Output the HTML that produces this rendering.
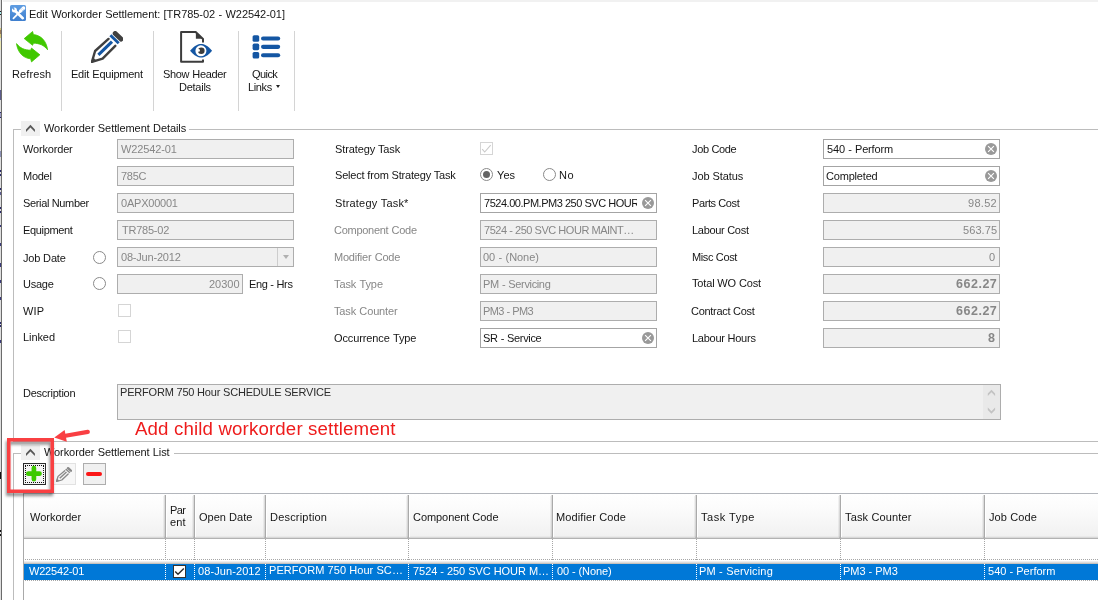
<!DOCTYPE html>
<html>
<head>
<meta charset="utf-8">
<title>Edit Workorder Settlement</title>
<style>
html,body{margin:0;padding:0;}
body{width:1098px;height:600px;overflow:hidden;background:#fff;position:relative;font-family:"Liberation Sans",sans-serif;font-size:11px;color:#161616;}
.a{position:absolute;white-space:nowrap;}
.t{position:absolute;white-space:nowrap;line-height:14px;height:14px;will-change:transform;}
.th{letter-spacing:0px;}
.g{color:#8c8c8c;}
.in{position:absolute;box-sizing:border-box;height:20px;width:177px;border:1px solid #adadad;background:#f0f0f0;color:#8c8c8c;line-height:18px;padding:0 3px;white-space:nowrap;overflow:hidden;}
.in.w{background:#fff;color:#1e1e1e;border-color:#a4a4a4;}
.in.r{text-align:right;padding-right:3px;}
.in.b{font-weight:bold;font-size:12px;}
.sep{position:absolute;top:31px;width:1px;height:80px;background:#d4d4d4;}
.hl{position:absolute;height:1px;background:#bcbcbc;}
.vl{position:absolute;width:1px;background:#bcbcbc;}
.radio{position:absolute;box-sizing:border-box;width:13px;height:13px;border:1px solid #8a8a8a;border-radius:50%;background:#fff;}
.cb{position:absolute;box-sizing:border-box;width:13px;height:13px;border:1px solid #d5d5d5;background:#fff;}
.clr{position:absolute;width:12px;height:12px;}
.colb{position:absolute;background:#f0f0f0;}
.hs{position:absolute;top:495px;width:1px;height:43px;background:#aaaaaa;}
.hs0{position:absolute;top:496px;width:1px;height:41px;background:rgba(0,0,0,0.05);}
.hs1{position:absolute;top:495px;width:1px;height:43px;background:rgba(0,0,0,0.13);}
.hs2{position:absolute;top:495px;width:1px;height:42px;background:#fff;}
.ht{position:absolute;white-space:nowrap;top:510px;line-height:14px;}
.dv{position:absolute;width:1px;background:repeating-linear-gradient(to bottom,#a6a6a6 0,#a6a6a6 1px,transparent 1px,transparent 2px);}
.dh{position:absolute;height:1px;background:repeating-linear-gradient(to right,#a6a6a6 0,#a6a6a6 1px,transparent 1px,transparent 2px);}
.dvw{position:absolute;width:1px;background:repeating-linear-gradient(to bottom,#fff 0,#fff 1px,transparent 1px,transparent 2px);}
.rt{position:absolute;white-space:nowrap;top:565px;line-height:14px;color:#fff;}
</style>
</head>
<body>

<!-- window edges -->
<div class="a" style="left:0;top:0;width:1px;height:600px;background:#dedede;"></div>
<div class="a" style="left:1px;top:0;width:1px;height:600px;background:#6b6b6b;"></div>
<!-- fragments of window behind -->
<div class="a" style="left:0;top:11px;width:1px;height:1px;background:#222;"></div><div class="a" style="left:0;top:12px;width:1px;height:2px;background:#a8eef0;"></div><div class="a" style="left:0;top:14px;width:1px;height:1px;background:#222;"></div><div class="a" style="left:0;top:28px;width:1px;height:2px;background:#d2c67a;"></div><div class="a" style="left:0;top:30px;width:1px;height:4px;background:#9a7a5a;"></div><div class="a" style="left:0;top:34px;width:1px;height:4px;background:#d2c67a;"></div><div class="a" style="left:0;top:41px;width:1px;height:9px;background:#ebe8b4;"></div><div class="a" style="left:0;top:90px;width:1px;height:10px;background:#5c5c8c;"></div><div class="a" style="left:0;top:112px;width:1px;height:1px;background:#2a2a6a;"></div><div class="a" style="left:0;top:113px;width:1px;height:4px;background:#9a9ac0;"></div><div class="a" style="left:0;top:117px;width:1px;height:1px;background:#2a2a6a;"></div><div class="a" style="left:0;top:151px;width:1px;height:6px;background:#8a8fb4;"></div><div class="a" style="left:0;top:170px;width:1px;height:2px;background:#2a2a6a;"></div><div class="a" style="left:0;top:174px;width:1px;height:2px;background:#2a2a6a;"></div><div class="a" style="left:0;top:188px;width:1px;height:2px;background:#2a2a6a;"></div><div class="a" style="left:0;top:192px;width:1px;height:3px;background:#5a5a90;"></div><div class="a" style="left:0;top:207px;width:1px;height:2px;background:#2a2a6a;"></div><div class="a" style="left:0;top:211px;width:1px;height:2px;background:#2a2a6a;"></div><div class="a" style="left:0;top:225px;width:1px;height:2px;background:#3a3a7a;"></div><div class="a" style="left:0;top:243px;width:1px;height:3px;background:#3a3a7a;"></div><div class="a" style="left:0;top:263px;width:1px;height:4px;background:#3a3a7a;"></div><div class="a" style="left:0;top:280px;width:1px;height:3px;background:#3a3a7a;"></div><div class="a" style="left:0;top:297px;width:1px;height:3px;background:#3a3a7a;"></div><div class="a" style="left:0;top:322px;width:1px;height:2px;background:#2a2a6a;"></div><div class="a" style="left:0;top:325px;width:1px;height:2px;background:#2a2a6a;"></div><div class="a" style="left:0;top:340px;width:1px;height:3px;background:#3a3a7a;"></div><div class="a" style="left:0;top:472px;width:1px;height:7px;background:#111;"></div><div class="a" style="left:0;top:530px;width:1px;height:2px;background:#111;"></div><div class="a" style="left:0;top:534px;width:1px;height:2px;background:#111;"></div>
<div class="a" style="left:3px;top:0;width:1095px;height:2px;background:#f1f1f1;"></div>

<!-- title bar -->
<svg class="a" style="left:10px;top:5px;" width="16" height="16" viewBox="0 0 16 16">
  <defs><linearGradient id="tg" x1="0" y1="0" x2="0" y2="1"><stop offset="0" stop-color="#5f9de2"/><stop offset="1" stop-color="#3f7fce"/></linearGradient></defs>
  <rect x="0" y="0" width="16" height="16" rx="1.6" fill="url(#tg)"/>
  <path d="M3.4 13.4 L9.6 7.2" stroke="#fff" stroke-width="1.7" stroke-linecap="round"/>
  <path d="M10.4 6.2 L13.6 3" stroke="#fff" stroke-width="3.3" stroke-linecap="round"/>
  <path d="M10.6 5 L12.6 3 M11.8 6.2 L13.8 4.2" stroke="#a9c8ee" stroke-width="0.6"/>
  <path d="M5.6 6.2 L12.8 13.2" stroke="#fff" stroke-width="2.6" stroke-linecap="round"/>
  <circle cx="4.4" cy="4.9" r="2.5" fill="#fff"/>
  <path d="M4.3 4.6 L2.4 2.2" stroke="#5f9de2" stroke-width="1.5"/>
</svg>

<!-- toolbar -->
<div class="sep" style="left:61px;"></div>
<div class="sep" style="left:153px;"></div>
<div class="sep" style="left:238px;"></div>
<div class="sep" style="left:294px;"></div>

<svg class="a" style="left:16px;top:31px;" width="32" height="32" viewBox="0 0 32 32">
  <g fill="#40c800" stroke="#40c800" stroke-width="0.8" stroke-linejoin="round">
    <path d="M8.2 7.6 L16.6 0.5 L17.4 3.6 C25 4.2 30.4 10 31.6 18.8 C28 14.2 23.6 12.3 17.4 12.2 L16.6 14.3 Z"/>
    <path transform="rotate(180 16.05 15.7)" d="M8.2 7.6 L16.6 0.5 L17.4 3.6 C25 4.2 30.4 10 31.6 18.8 C28 14.2 23.6 12.3 17.4 12.2 L16.6 14.3 Z"/>
  </g>
</svg>
<svg class="a" style="left:91px;top:31px;" width="32" height="32" viewBox="0 0 32 32">
  <path d="M17.5 7.9 L4.1 20 L0.9 30.9 L11.6 27.7 L24.3 14.8" fill="none" stroke="#404040" stroke-width="2.4" stroke-linecap="round" stroke-linejoin="round"/>
  <path d="M0.9 30.9 L2 26.8 L5 29.7 Z" fill="#404040" stroke="#404040" stroke-width="1" stroke-linejoin="round"/>
  <path d="M21 10.6 L7.4 23.9" stroke="#1456a3" stroke-width="3.1" fill="none"/>
  <path d="M19.4 4.3 L27.7 12.2" stroke="#1456a3" stroke-width="2.9" fill="none"/>
  <path d="M24.2 2.5 L30 8.1" stroke="#404040" stroke-width="4.9" stroke-linecap="round" fill="none"/>
</svg>
<svg class="a" style="left:178px;top:31px;" width="36" height="32" viewBox="0 0 36 32">
  <path d="M25 11.6 V7.9 L17.7 1 H3.1 V30.7 H25 V28.4" fill="none" stroke="#3c3c3c" stroke-width="2" stroke-linejoin="round"/>
  <path d="M17.9 1.4 V7.7 H24.6 Z" fill="#3c3c3c"/>
  <path d="M12.1 19.8 C16.5 14.6 20 13.1 23.1 13.1 C26.2 13.1 29.7 14.6 34.1 19.8 C29.7 25 26.2 26.5 23.1 26.5 C20 26.5 16.5 25 12.1 19.8 Z" fill="#1456a3"/>
  <circle cx="22.9" cy="19.8" r="5.5" fill="#fff"/>
  <circle cx="23.3" cy="19.8" r="3.3" fill="#3c3c3c"/>
  <circle cx="20.6" cy="19.4" r="1.3" fill="#fff"/>
</svg>
<svg class="a" style="left:252px;top:34px;" width="29" height="26" viewBox="0 0 29 26">
  <g fill="#1456a3">
    <rect x="0.6" y="1.2" width="6.6" height="6.6" rx="1.6"/>
    <rect x="0.6" y="9.6" width="6.6" height="6.6" rx="1.6"/>
    <rect x="0.6" y="18" width="6.6" height="6.6" rx="1.6"/>
    <rect x="9" y="2.4" width="19.2" height="4.1" rx="2.05"/>
    <rect x="9" y="10.8" width="19.2" height="4.1" rx="2.05"/>
    <rect x="9" y="19.2" width="19.2" height="4.1" rx="2.05"/>
  </g>
</svg>

<div class="a" style="left:276px;top:85px;width:0;height:0;border-left:2.5px solid transparent;border-right:2.5px solid transparent;border-top:3px solid #222;"></div>

<!-- group box 1 -->
<div class="hl" style="left:13px;top:129px;width:8px;"></div>
<div class="hl" style="left:189px;top:129px;width:909px;"></div>
<div class="vl" style="left:13px;top:129px;height:313px;"></div>
<div class="vl" style="left:13px;top:453px;height:147px;"></div>
<div class="hl" style="left:13px;top:441px;width:1085px;"></div>
<div class="colb" style="left:21px;top:121px;width:19px;height:15px;"></div>
<svg class="a" style="left:21px;top:121px;" width="19" height="15" viewBox="0 0 19 15"><path d="M9.45 3.8 L13.9 8.5 V11.1 L9.45 6.5 L5 11.1 V8.5 Z" fill="#585858"/></svg>

<!-- left column -->

<div class="in" style="left:117px;top:139px;"></div>
<div class="in" style="left:117px;top:166px;"></div>
<div class="in" style="left:117px;top:193px;"></div>
<div class="in" style="left:117px;top:220px;"></div>
<div class="in" style="left:117px;top:247px;"></div>
<div class="vl" style="left:277px;top:248px;height:18px;background:#cdcdcd;"></div>
<div class="a" style="left:282.5px;top:255px;width:0;height:0;border-left:3.5px solid transparent;border-right:3.5px solid transparent;border-top:4px solid #b0b0b0;"></div>
<div class="in r" style="left:117px;top:274px;width:126px;"></div>
<div class="radio" style="left:93px;top:251px;"></div>
<div class="radio" style="left:93px;top:277px;"></div>
<div class="cb" style="left:118px;top:304px;"></div>
<div class="cb" style="left:118px;top:330px;"></div>

<!-- description -->
<div class="a" style="left:117px;top:384px;width:884px;height:36px;box-sizing:border-box;border:1px solid #adadad;background:#f0f0f0;"></div>
<div class="a" style="left:983px;top:385px;width:17px;height:34px;background:#e9e9e9;"></div>
<svg class="a" style="left:983px;top:385px;" width="17" height="34" viewBox="0 0 17 34"><path d="M8.45 4.8 L12.1 8.5 V11 L8.45 7.3 L4.8 11 V8.5 Z" fill="#c3c3c3"/><path d="M8.45 28.8 L12.1 25.1 V22.6 L8.45 26.3 L4.8 22.6 V25.1 Z" fill="#c3c3c3"/></svg>

<!-- middle column -->

<div class="cb" style="left:480px;top:142px;border-color:#d5d5d5;"></div>
<svg class="a" style="left:480px;top:142px;" width="13" height="13" viewBox="0 0 13 13"><path d="M2.2 7.2 L4.7 10 L10.7 3.2" fill="none" stroke="#cacaca" stroke-width="1.1"/></svg>
<div class="radio" style="left:480px;top:168px;"></div>
<div class="a" style="left:483px;top:171px;width:7px;height:7px;border-radius:50%;background:#646464;"></div>
<div class="radio" style="left:543px;top:168px;"></div>

<div class="in w th" style="left:480px;top:193px;"></div>
<div class="in th" style="left:480px;top:220px;"></div>
<div class="in th" style="left:480px;top:247px;"></div>
<div class="in th" style="left:480px;top:274px;"></div>
<div class="in th" style="left:480px;top:301px;"></div>
<div class="in w th" style="left:480px;top:328px;"></div>

<!-- right column -->

<div class="in w th" style="left:823px;top:139px;"></div>
<div class="in w th" style="left:823px;top:166px;"></div>
<div class="in r" style="left:823px;top:193px;"></div>
<div class="in r" style="left:823px;top:220px;"></div>
<div class="in r" style="left:823px;top:247px;"></div>
<div class="in r b" style="left:823px;top:274px;"></div>
<div class="in r b" style="left:823px;top:301px;"></div>
<div class="in r b" style="left:823px;top:328px;"></div>

<!-- clear buttons -->
<svg class="clr" style="left:642px;top:197px;" viewBox="0 0 12 12"><circle cx="6" cy="6" r="6" fill="#999"/><path d="M3.1 3.1 L8.9 8.9 M8.9 3.1 L3.1 8.9" stroke="#fff" stroke-width="1.1"/></svg>
<svg class="clr" style="left:642px;top:332px;" viewBox="0 0 12 12"><circle cx="6" cy="6" r="6" fill="#999"/><path d="M3.1 3.1 L8.9 8.9 M8.9 3.1 L3.1 8.9" stroke="#fff" stroke-width="1.1"/></svg>
<svg class="clr" style="left:985px;top:143px;" viewBox="0 0 12 12"><circle cx="6" cy="6" r="6" fill="#999"/><path d="M3.1 3.1 L8.9 8.9 M8.9 3.1 L3.1 8.9" stroke="#fff" stroke-width="1.1"/></svg>
<svg class="clr" style="left:985px;top:170px;" viewBox="0 0 12 12"><circle cx="6" cy="6" r="6" fill="#999"/><path d="M3.1 3.1 L8.9 8.9 M8.9 3.1 L3.1 8.9" stroke="#fff" stroke-width="1.1"/></svg>

<!-- annotation text -->

<!-- group box 2 -->
<div class="hl" style="left:13px;top:453px;width:8px;"></div>
<div class="hl" style="left:174px;top:453px;width:924px;"></div>
<div class="colb" style="left:21px;top:445px;width:19px;height:15px;"></div>
<svg class="a" style="left:21px;top:445px;" width="19" height="15" viewBox="0 0 19 15"><path d="M9.45 3.8 L13.9 8.5 V11.1 L9.45 6.5 L5 11.1 V8.5 Z" fill="#585858"/></svg>

<!-- list buttons -->
<div class="a" style="left:23px;top:463px;width:23px;height:22px;box-sizing:border-box;border:1px solid #2b2b2b;background:#f4f4f4;"></div>
<div class="a" style="left:25px;top:465px;width:19px;height:18px;box-sizing:border-box;border:1px dotted #111;"></div>
<svg class="a" style="left:23px;top:463px;" width="23" height="22" viewBox="0 0 23 22"><path d="M5.3 10.7 H16.5 M10.9 5.1 V16.2" stroke="#3ec800" stroke-width="4.7" stroke-linecap="round" fill="none"/></svg>
<div class="a" style="left:53px;top:463px;width:23px;height:22px;box-sizing:border-box;border:1px solid #e2e2e2;background:#f7f7f7;"></div>
<svg class="a" style="left:56px;top:467px;" width="16" height="15" viewBox="0 0 32 32" preserveAspectRatio="none">
  <path d="M17.5 7.9 L4.1 20 L0.9 30.9 L11.6 27.7 L24.3 14.8" fill="none" stroke="#8a8a8a" stroke-width="2.7" stroke-linecap="round" stroke-linejoin="round"/>
  <path d="M0.9 30.9 L2.4 25.6 L6.2 29.3 Z" fill="#8a8a8a" stroke="#8a8a8a" stroke-width="1" stroke-linejoin="round"/>
  <path d="M21 10.6 L7.4 23.9" stroke="#8a8a8a" stroke-width="2.9" fill="none"/>
  <path d="M19.4 4.3 L27.7 12.2" stroke="#8a8a8a" stroke-width="2.9" fill="none"/>
  <path d="M24.2 2.5 L30 8.1" stroke="#8a8a8a" stroke-width="4.9" stroke-linecap="round" fill="none"/>
</svg>
<div class="a" style="left:83px;top:463px;width:23px;height:22px;box-sizing:border-box;border:1px solid #adadad;background:#f0f0f0;"></div>
<div class="a" style="left:86px;top:472px;width:16px;height:4px;border-radius:2px;background:#fb1616;"></div>

<!-- grid -->
<div class="hl" style="left:23px;top:493px;width:1075px;background:#b3b6bc;"></div>
<div class="vl" style="left:23px;top:493px;height:107px;background:#a9a9a9;"></div>
<div class="a" style="left:24px;top:494px;width:1074px;height:42px;background:linear-gradient(#ffffff 0%,#fcfcfc 30%,#f1f1f1 100%);"></div>
<div class="hl" style="left:24px;top:536px;width:1074px;background:#e9e9e9;"></div>
<div class="hl" style="left:24px;top:537px;width:1074px;background:#d8d8d8;"></div>
<div class="hl" style="left:24px;top:538px;width:1074px;background:#b2b2b2;"></div>
<div class="hs0" style="left:163px;"></div><div class="hs1" style="left:164px;"></div><div class="hs" style="left:165px;"></div><div class="hs2" style="left:166px;"></div>
<div class="hs0" style="left:192px;"></div><div class="hs1" style="left:193px;"></div><div class="hs" style="left:194px;"></div><div class="hs2" style="left:195px;"></div>
<div class="hs0" style="left:263px;"></div><div class="hs1" style="left:264px;"></div><div class="hs" style="left:265px;"></div><div class="hs2" style="left:266px;"></div>
<div class="hs0" style="left:406px;"></div><div class="hs1" style="left:407px;"></div><div class="hs" style="left:408px;"></div><div class="hs2" style="left:409px;"></div>
<div class="hs0" style="left:550px;"></div><div class="hs1" style="left:551px;"></div><div class="hs" style="left:552px;"></div><div class="hs2" style="left:553px;"></div>
<div class="hs0" style="left:694px;"></div><div class="hs1" style="left:695px;"></div><div class="hs" style="left:696px;"></div><div class="hs2" style="left:697px;"></div>
<div class="hs0" style="left:838px;"></div><div class="hs1" style="left:839px;"></div><div class="hs" style="left:840px;"></div><div class="hs2" style="left:841px;"></div>
<div class="hs0" style="left:982px;"></div><div class="hs1" style="left:983px;"></div><div class="hs" style="left:984px;"></div><div class="hs2" style="left:985px;"></div>

<!-- filter row + dotted lines -->
<div class="dh" style="left:25px;top:559px;width:1073px;"></div>
<div class="a" style="left:24px;top:561px;width:1074px;height:1px;background:#eeeeee;"></div>
<div class="a" style="left:24px;top:562px;width:1074px;height:1px;background:#dddddd;"></div>
<div class="a" style="left:24px;top:563px;width:1074px;height:1px;background:#c6c2be;"></div>
<div class="dv" style="left:165px;top:539px;height:21px;"></div>
<div class="dv" style="left:194px;top:539px;height:21px;"></div>
<div class="dv" style="left:265px;top:539px;height:21px;"></div>
<div class="dv" style="left:408px;top:539px;height:21px;"></div>
<div class="dv" style="left:552px;top:539px;height:21px;"></div>
<div class="dv" style="left:696px;top:539px;height:21px;"></div>
<div class="dv" style="left:840px;top:539px;height:21px;"></div>
<div class="dv" style="left:984px;top:539px;height:21px;"></div>

<!-- selected row -->
<div class="a" style="left:24px;top:564px;width:1074px;height:16px;background:#0078d7;"></div>
<div class="dh" style="left:25px;top:580px;width:1073px;"></div>
<div class="dvw" style="left:165px;top:564px;height:16px;"></div>
<div class="dvw" style="left:194px;top:564px;height:16px;"></div>
<div class="dvw" style="left:265px;top:564px;height:16px;"></div>
<div class="dvw" style="left:408px;top:564px;height:16px;"></div>
<div class="dvw" style="left:552px;top:564px;height:16px;"></div>
<div class="dvw" style="left:696px;top:564px;height:16px;"></div>
<div class="dvw" style="left:840px;top:564px;height:16px;"></div>
<div class="dvw" style="left:984px;top:564px;height:16px;"></div>
<div class="a" style="left:173px;top:565px;width:13px;height:13px;box-sizing:border-box;border:1px solid #333;background:#fff;"></div>
<svg class="a" style="left:173px;top:565px;" width="13" height="13" viewBox="0 0 13 13"><path d="M2.2 6.4 L5 9.3 L10.8 3.4" fill="none" stroke="#2b2b2b" stroke-width="1.4"/></svg>

<!-- text -->
<div class="t" style="left:28.72px;top:7px;letter-spacing:-0.055px;word-spacing:0.4px;">Edit Workorder Settlement: [TR785-02 - W22542-01]</div>
<div class="t" style="left:12px;top:67px;letter-spacing:0.110px;word-spacing:0.4px;">Refresh</div>
<div class="t" style="left:70.79px;top:67px;letter-spacing:-0.227px;word-spacing:0.4px;">Edit Equipment</div>
<div class="t" style="left:162.92px;top:67px;letter-spacing:-0.327px;word-spacing:0.4px;">Show Header</div>
<div class="t" style="left:179.27px;top:80px;letter-spacing:-0.260px;word-spacing:0.4px;">Details</div>
<div class="t" style="left:251.96px;top:67px;letter-spacing:-0.576px;word-spacing:0.4px;">Quick</div>
<div class="t" style="left:248.44px;top:80px;letter-spacing:-0.381px;word-spacing:0.4px;">Links</div>
<div class="t" style="left:43.66px;top:121px;letter-spacing:-0.075px;word-spacing:0.4px;">Workorder Settlement Details</div>
<div class="t" style="left:43.66px;top:445px;letter-spacing:-0.089px;word-spacing:0.4px;">Workorder Settlement List</div>
<div class="t" style="left:23.42px;top:142px;letter-spacing:-0.171px;">Workorder</div>
<div class="t" style="left:22.8px;top:169px;letter-spacing:-0.279px;">Model</div>
<div class="t" style="left:22.92px;top:196px;letter-spacing:-0.347px;">Serial Number</div>
<div class="t" style="left:22.8px;top:223px;letter-spacing:-0.345px;">Equipment</div>
<div class="t" style="left:22.79px;top:251px;letter-spacing:-0.172px;">Job Date</div>
<div class="t" style="left:22.77px;top:277px;letter-spacing:-0.251px;">Usage</div>
<div class="t" style="left:23.15px;top:304px;letter-spacing:0.107px;">WIP</div>
<div class="t" style="left:22.78px;top:329.5px;letter-spacing:-0.081px;">Linked</div>
<div class="t" style="left:22.78px;top:386px;letter-spacing:-0.242px;">Description</div>
<div class="t" style="left:248.72px;top:277px;letter-spacing:-0.322px;">Eng - Hrs</div>
<div class="t" style="left:121px;top:142px;letter-spacing:-0.136px;color:#878787;">W22542-01</div>
<div class="t" style="left:120.54px;top:169px;letter-spacing:-0.264px;color:#878787;">785C</div>
<div class="t" style="left:120.72px;top:196px;letter-spacing:-0.217px;color:#878787;">0APX00001</div>
<div class="t" style="left:121.61px;top:223px;letter-spacing:-0.233px;color:#878787;">TR785-02</div>
<div class="t" style="left:120.72px;top:250px;letter-spacing:-0.195px;color:#878787;">08-Jun-2012</div>
<div class="t" style="left:208.75px;top:277px;letter-spacing:-0.012px;color:#878787;">20300</div>
<div class="t" style="left:120px;top:385px;letter-spacing:-0.196px;color:#2b2b2b;">PERFORM 750 Hour SCHEDULE SERVICE</div>
<div class="t" style="left:334.58px;top:142px;letter-spacing:-0.102px;">Strategy Task</div>
<div class="t" style="left:334.58px;top:168px;letter-spacing:-0.181px;">Select from Strategy Task</div>
<div class="t" style="left:334.58px;top:196px;letter-spacing:0.174px;word-spacing:0.4px;">Strategy Task*</div>
<div class="t" style="left:334.36px;top:223px;letter-spacing:-0.277px;color:#878787;word-spacing:0.4px;">Component Code</div>
<div class="t" style="left:334.24px;top:250px;letter-spacing:-0.208px;color:#878787;word-spacing:0.4px;">Modifier Code</div>
<div class="t" style="left:334.41px;top:277px;letter-spacing:-0.090px;color:#878787;word-spacing:0.4px;">Task Type</div>
<div class="t" style="left:334.41px;top:304px;letter-spacing:-0.144px;color:#878787;word-spacing:0.4px;">Task Counter</div>
<div class="t" style="left:334.41px;top:331px;letter-spacing:-0.112px;word-spacing:0.4px;">Occurrence Type</div>
<div class="t" style="left:497px;top:168px;letter-spacing:0.071px;">Yes</div>
<div class="t" style="left:558.97px;top:168px;letter-spacing:0.482px;">No</div>
<div class="t" style="left:483.82px;top:196px;letter-spacing:-0.473px;width:152.78px;overflow:hidden;">7524.00.PM.PM3 250 SVC HOUR</div>
<div class="t" style="left:483.82px;top:223px;letter-spacing:-0.466px;color:#878787;">7524 - 250 SVC HOUR MAINT…</div>
<div class="t" style="left:482.94px;top:250px;letter-spacing:-0.055px;color:#878787;word-spacing:0.4px;">00 - (None)</div>
<div class="t" style="left:483px;top:277px;letter-spacing:-0.351px;color:#878787;word-spacing:0.4px;">PM - Servicing</div>
<div class="t" style="left:483px;top:304px;letter-spacing:-0.637px;color:#878787;word-spacing:0.4px;">PM3 - PM3</div>
<div class="t" style="left:482.99px;top:331px;letter-spacing:-0.354px;word-spacing:0.4px;">SR - Service</div>
<div class="t" style="left:691.61px;top:142px;letter-spacing:-0.351px;">Job Code</div>
<div class="t" style="left:691.61px;top:169px;letter-spacing:-0.086px;">Job Status</div>
<div class="t" style="left:691.72px;top:196px;letter-spacing:-0.404px;">Parts Cost</div>
<div class="t" style="left:691.71px;top:223px;letter-spacing:-0.299px;">Labour Cost</div>
<div class="t" style="left:691.72px;top:250px;letter-spacing:-0.368px;">Misc Cost</div>
<div class="t" style="left:692.26px;top:276px;letter-spacing:-0.155px;">Total WO Cost</div>
<div class="t" style="left:691.36px;top:304px;letter-spacing:-0.290px;">Contract Cost</div>
<div class="t" style="left:691.71px;top:331px;letter-spacing:-0.250px;">Labour Hours</div>
<div class="t" style="left:826.7px;top:142px;letter-spacing:-0.162px;word-spacing:0.4px;">540 - Perform</div>
<div class="t" style="left:826.36px;top:169px;letter-spacing:-0.183px;word-spacing:0.4px;">Completed</div>
<div class="t" style="left:968.36px;top:196px;letter-spacing:0.298px;color:#878787;">98.52</div>
<div class="t" style="left:962.54px;top:223px;letter-spacing:0.086px;color:#878787;">563.75</div>
<div class="t" style="left:989.42px;top:250px;color:#878787;">0</div>
<div class="t" style="left:955.88px;top:272px;font-size:12.5px;line-height:24px;height:24px;font-weight:700;letter-spacing:0.514px;color:#878787;">662.27</div>
<div class="t" style="left:955.88px;top:299px;font-size:12.5px;line-height:24px;height:24px;font-weight:700;letter-spacing:0.514px;color:#878787;">662.27</div>
<div class="t" style="left:988.05px;top:326px;font-size:12.5px;line-height:24px;height:24px;font-weight:700;color:#878787;">8</div>
<div class="t" style="left:134.55px;top:416.5px;font-size:18.67px;line-height:24px;height:24px;letter-spacing:0.151px;color:#ee1c1c;">Add child workorder settlement</div>
<div class="t" style="left:29.68px;top:510px;">Workorder</div>
<div class="t" style="left:169.8px;top:503px;letter-spacing:-0.552px;">Par</div>
<div class="t" style="left:170.05px;top:515px;letter-spacing:0.130px;">ent</div>
<div class="t" style="left:198.94px;top:510px;letter-spacing:0.020px;">Open Date</div>
<div class="t" style="left:270.27px;top:510px;letter-spacing:0.192px;">Description</div>
<div class="t" style="left:412.76px;top:510px;letter-spacing:-0.056px;">Component Code</div>
<div class="t" style="left:555.98px;top:510px;letter-spacing:0.111px;">Modifier Code</div>
<div class="t" style="left:700.79px;top:510px;letter-spacing:0.508px;">Task Type</div>
<div class="t" style="left:845.26px;top:510px;letter-spacing:0.155px;">Task Counter</div>
<div class="t" style="left:988.87px;top:510px;letter-spacing:0.114px;">Job Code</div>
<div class="t" style="left:28.85px;top:564px;letter-spacing:-0.194px;color:#ffffff;">W22542-01</div>
<div class="t" style="left:197.96px;top:564px;letter-spacing:0.091px;color:#ffffff;">08-Jun-2012</div>
<div class="t" style="left:268.61px;top:563px;letter-spacing:0.065px;color:#ffffff;">PERFORM 750 Hour SC…</div>
<div class="t" style="left:412.54px;top:564px;letter-spacing:-0.043px;color:#ffffff;">7524 - 250 SVC HOUR M…</div>
<div class="t" style="left:557.27px;top:564px;letter-spacing:-0.092px;color:#ffffff;">00 - (None)</div>
<div class="t" style="left:699.3px;top:564px;letter-spacing:0.173px;color:#ffffff;">PM - Servicing</div>
<div class="t" style="left:843.45px;top:564px;letter-spacing:-0.030px;color:#ffffff;">PM3 - PM3</div>
<div class="t" style="left:988.15px;top:564px;letter-spacing:0.017px;color:#ffffff;">540 - Perform</div>

<!-- annotation: red rectangle + arrow -->
<svg class="a" style="left:0;top:420px;" width="110" height="90" viewBox="0 0 110 90">
  <defs><filter id="sh" x="-40%" y="-40%" width="180%" height="180%"><feDropShadow dx="-1" dy="3" stdDeviation="1.8" flood-color="#000" flood-opacity="0.45"/></filter></defs>
  <rect x="8.75" y="19.75" width="43.5" height="51.5" fill="none" stroke="#f93f43" stroke-width="3.5" filter="url(#sh)"/>
  <path d="M65.5 15.7 L87.8 11.9" stroke="#f93f43" stroke-width="4.2" stroke-linecap="round" fill="none"/>
  <path d="M54.3 17.6 L64.6 9.9 L65.7 15.4 L66.8 21.7 Z" fill="#f93f43"/>
</svg>

</body>
</html>
